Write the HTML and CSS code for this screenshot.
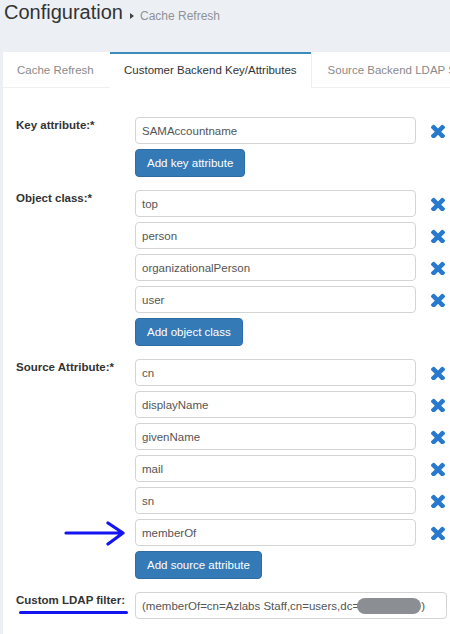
FILE: index.html
```html
<!DOCTYPE html>
<html lang="en">
<head>
<meta charset="utf-8">
<title>Configuration - Cache Refresh</title>
<link rel="stylesheet" href="styles.css">
</head>
<body>
<header class="page-header">
  <h1 class="title">Configuration</h1>
  <span class="crumb"><span class="crumb-arrow"></span>Cache Refresh</span>
</header>
<section class="panel">
  <nav class="tabs">
    <div class="tab">Cache Refresh</div>
    <div class="tab active">Customer Backend Key/Attributes</div>
    <div class="tab last">Source Backend LDAP Servers</div>
  </nav>
  <div class="tab-body">
    <div class="group">
      <label class="label">Key attribute:*</label>
      <div class="fields">
        <div class="row"><div class="input">SAMAccountname</div><span class="remove"><svg viewBox="302 310 1188 1188"><path d="M1490 1322q0 40-28 68l-136 136q-28 28-68 28t-68-28l-294-294-294 294q-28 28-68 28t-68-28l-136-136q-28-28-28-68t28-68l294-294-294-294q-28-28-28-68t28-68l136-136q28-28 68-28t68 28l294 294 294-294q28-28 68-28t68 28l136 136q28 28 28 68t-28 68l-294 294 294 294q28 28 28 68z"/></svg></span></div>
        <button class="btn">Add key attribute</button>
      </div>
    </div>
    <div class="group">
      <label class="label">Object class:*</label>
      <div class="fields">
        <div class="row"><div class="input">top</div><span class="remove"><svg viewBox="302 310 1188 1188"><path d="M1490 1322q0 40-28 68l-136 136q-28 28-68 28t-68-28l-294-294-294 294q-28 28-68 28t-68-28l-136-136q-28-28-28-68t28-68l294-294-294-294q-28-28-28-68t28-68l136-136q28-28 68-28t68 28l294 294 294-294q28-28 68-28t68 28l136 136q28 28 28 68t-28 68l-294 294 294 294q28 28 28 68z"/></svg></span></div>
        <div class="row"><div class="input">person</div><span class="remove"><svg viewBox="302 310 1188 1188"><path d="M1490 1322q0 40-28 68l-136 136q-28 28-68 28t-68-28l-294-294-294 294q-28 28-68 28t-68-28l-136-136q-28-28-28-68t28-68l294-294-294-294q-28-28-28-68t28-68l136-136q28-28 68-28t68 28l294 294 294-294q28-28 68-28t68 28l136 136q28 28 28 68t-28 68l-294 294 294 294q28 28 28 68z"/></svg></span></div>
        <div class="row"><div class="input">organizationalPerson</div><span class="remove"><svg viewBox="302 310 1188 1188"><path d="M1490 1322q0 40-28 68l-136 136q-28 28-68 28t-68-28l-294-294-294 294q-28 28-68 28t-68-28l-136-136q-28-28-28-68t28-68l294-294-294-294q-28-28-28-68t28-68l136-136q28-28 68-28t68 28l294 294 294-294q28-28 68-28t68 28l136 136q28 28 28 68t-28 68l-294 294 294 294q28 28 28 68z"/></svg></span></div>
        <div class="row"><div class="input">user</div><span class="remove"><svg viewBox="302 310 1188 1188"><path d="M1490 1322q0 40-28 68l-136 136q-28 28-68 28t-68-28l-294-294-294 294q-28 28-68 28t-68-28l-136-136q-28-28-28-68t28-68l294-294-294-294q-28-28-28-68t28-68l136-136q28-28 68-28t68 28l294 294 294-294q28-28 68-28t68 28l136 136q28 28 28 68t-28 68l-294 294 294 294q28 28 28 68z"/></svg></span></div>
        <button class="btn">Add object class</button>
      </div>
    </div>
    <div class="group">
      <label class="label">Source Attribute:*</label>
      <div class="fields">
        <div class="row"><div class="input">cn</div><span class="remove"><svg viewBox="302 310 1188 1188"><path d="M1490 1322q0 40-28 68l-136 136q-28 28-68 28t-68-28l-294-294-294 294q-28 28-68 28t-68-28l-136-136q-28-28-28-68t28-68l294-294-294-294q-28-28-28-68t28-68l136-136q28-28 68-28t68 28l294 294 294-294q28-28 68-28t68 28l136 136q28 28 28 68t-28 68l-294 294 294 294q28 28 28 68z"/></svg></span></div>
        <div class="row"><div class="input">displayName</div><span class="remove"><svg viewBox="302 310 1188 1188"><path d="M1490 1322q0 40-28 68l-136 136q-28 28-68 28t-68-28l-294-294-294 294q-28 28-68 28t-68-28l-136-136q-28-28-28-68t28-68l294-294-294-294q-28-28-28-68t28-68l136-136q28-28 68-28t68 28l294 294 294-294q28-28 68-28t68 28l136 136q28 28 28 68t-28 68l-294 294 294 294q28 28 28 68z"/></svg></span></div>
        <div class="row"><div class="input">givenName</div><span class="remove"><svg viewBox="302 310 1188 1188"><path d="M1490 1322q0 40-28 68l-136 136q-28 28-68 28t-68-28l-294-294-294 294q-28 28-68 28t-68-28l-136-136q-28-28-28-68t28-68l294-294-294-294q-28-28-28-68t28-68l136-136q28-28 68-28t68 28l294 294 294-294q28-28 68-28t68 28l136 136q28 28 28 68t-28 68l-294 294 294 294q28 28 28 68z"/></svg></span></div>
        <div class="row"><div class="input">mail</div><span class="remove"><svg viewBox="302 310 1188 1188"><path d="M1490 1322q0 40-28 68l-136 136q-28 28-68 28t-68-28l-294-294-294 294q-28 28-68 28t-68-28l-136-136q-28-28-28-68t28-68l294-294-294-294q-28-28-28-68t28-68l136-136q28-28 68-28t68 28l294 294 294-294q28-28 68-28t68 28l136 136q28 28 28 68t-28 68l-294 294 294 294q28 28 28 68z"/></svg></span></div>
        <div class="row"><div class="input">sn</div><span class="remove"><svg viewBox="302 310 1188 1188"><path d="M1490 1322q0 40-28 68l-136 136q-28 28-68 28t-68-28l-294-294-294 294q-28 28-68 28t-68-28l-136-136q-28-28-28-68t28-68l294-294-294-294q-28-28-28-68t28-68l136-136q28-28 68-28t68 28l294 294 294-294q28-28 68-28t68 28l136 136q28 28 28 68t-28 68l-294 294 294 294q28 28 28 68z"/></svg></span></div>
        <div class="row marked"><svg class="arrow" viewBox="0 0 66 26"><path d="M3 13 H60 M45 3 L60 13 L45 24"/></svg><div class="input">memberOf</div><span class="remove"><svg viewBox="302 310 1188 1188"><path d="M1490 1322q0 40-28 68l-136 136q-28 28-68 28t-68-28l-294-294-294 294q-28 28-68 28t-68-28l-136-136q-28-28-28-68t28-68l294-294-294-294q-28-28-28-68t28-68l136-136q28-28 68-28t68 28l294 294 294-294q28-28 68-28t68 28l136 136q28 28 28 68t-28 68l-294 294 294 294q28 28 28 68z"/></svg></span></div>
        <button class="btn">Add source attribute</button>
      </div>
    </div>
    <div class="group">
      <label class="label underlined">Custom LDAP filter:</label>
      <div class="fields">
        <div class="input wide">(memberOf=cn=Azlabs Staff,cn=users,dc=<span class="redact"></span>)</div>
      </div>
    </div>
  </div>
</section>
</body>
</html>
```

FILE: styles.css
```css
* { box-sizing: border-box; }

html, body {
  margin: 0;
  padding: 0;
}

body {
  width: 450px;
  height: 634px;
  overflow: hidden;
  background: #ecf0f5;
  font-family: "Liberation Sans", Arial, sans-serif;
  color: #333;
}

.page-header {
  height: 52px;
  display: flex;
  align-items: baseline;
  padding: 0 4px;
  gap: 7px;
}

.title {
  margin: 0;
  font-size: 20px;
  font-weight: normal;
  line-height: 24px;
  color: #333;
}

.crumb {
  font-size: 12px;
  color: #8f9296;
  display: flex;
  align-items: center;
  gap: 6px;
}

.crumb-arrow {
  width: 0;
  height: 0;
  border-top: 3.5px solid transparent;
  border-bottom: 3.5px solid transparent;
  border-left: 4px solid #444;
}

.panel {
  margin-left: 3px;
  background: #fff;
  height: 582px;
}

.tabs {
  display: flex;
  height: 36px;
}

.tab {
  font-size: 11.5px;
  color: #8a8a8a;
  padding: 0 14px;
  display: flex;
  align-items: center;
  border-bottom: 1px solid #f0f0f0;
  white-space: nowrap;
}

.tab:first-child {
  width: 107px;
}

.tab.active {
  color: #333;
  border-top: 2px solid #3c8dbc;
  border-bottom: none;
  padding-bottom: 2px;
}

.tab.last {
  border-left: 1px solid #f0f0f0;
  padding-left: 16px;
  flex: 1;
  min-width: 0;
  overflow: hidden;
}

.tab-body {
  padding: 29px 0 0 13px;
  display: flex;
  flex-direction: column;
  gap: 13px;
}

.group {
  display: flex;
}

.label {
  width: 119px;
  font-size: 11.5px;
  font-weight: bold;
  color: #333;
  padding-top: 1px;
  line-height: 14px;
}

.fields {
  display: flex;
  flex-direction: column;
  gap: 5px;
  align-items: flex-start;
}

.row {
  display: flex;
  align-items: center;
  position: relative;
}

.input {
  width: 281px;
  height: 27px;
  border: 1px solid #d4d4d4;
  border-radius: 4px;
  padding: 0 6px;
  font-size: 11.5px;
  color: #555;
  display: flex;
  align-items: center;
  white-space: nowrap;
  overflow: hidden;
}

.input.wide {
  width: 312px;
  height: 27px;
}

.remove {
  width: 14px;
  height: 14px;
  margin-left: 15px;
  display: flex;
}

.remove svg {
  width: 14px;
  height: 14px;
  fill: #2679cc;
}

.btn {
  height: 28px;
  padding: 0 11px;
  border: 1px solid #2e6da4;
  border-radius: 4px;
  background: #337ab7;
  color: #fff;
  font-family: "Liberation Sans", Arial, sans-serif;
  font-size: 11.5px;
}

.arrow {
  position: absolute;
  left: -72px;
  top: 1px;
  width: 66px;
  height: 26px;
  fill: none;
  stroke: #1414f0;
  stroke-width: 3.2;
  stroke-linecap: round;
  stroke-linejoin: round;
}

.underlined {
  position: relative;
}

.underlined::after {
  content: "";
  position: absolute;
  left: 3px;
  top: 19px;
  width: 109px;
  height: 3px;
  border-radius: 2px;
  background: #1414f0;
}

.redact {
  display: inline-block;
  width: 64px;
  height: 16px;
  border-radius: 8px;
  background: #8b8f93;
  margin-left: -2px;
}
```
